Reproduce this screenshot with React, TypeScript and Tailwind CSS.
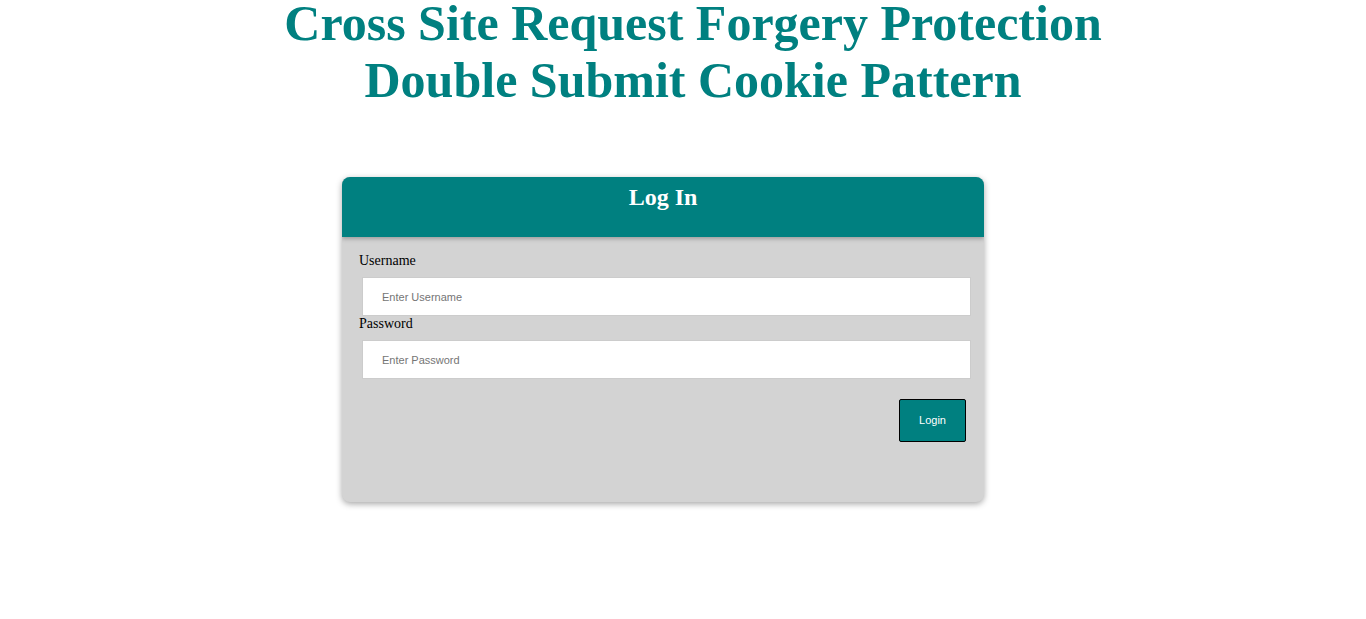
import React from 'react';

const App: React.FC = () => {
    return (
        <div className="min-h-[619px] bg-white font-['Liberation_Serif',serif] overflow-hidden">
            <h1 className="-mt-[5px] pl-[20px] text-center text-[50px] font-bold leading-[57px] text-[#008080]">
                Cross Site Request Forgery Protection<br />
                Double Submit Cookie Pattern
            </h1>

            <div className="ml-[342px] mt-[68px] w-[642px] h-[325px] rounded-lg bg-[#d3d3d3] shadow-[0_2px_6px_rgba(0,0,0,0.35)] overflow-hidden">
                <div className="relative z-10 h-[60px] bg-[#008080] pt-[6px] text-center shadow-[0_2px_4px_rgba(0,0,0,0.25)]">
                    <h2 className="text-[24px] font-bold leading-[28px] text-white">Log In</h2>
                </div>
                <form className="px-[17px] pt-[16px]" onSubmit={e => e.preventDefault()}>
                    <label className="block text-[14px] leading-[16px] text-black">Username</label>
                    <input
                        type="text"
                        placeholder="Enter Username"
                        className="mt-[8px] ml-[3px] block h-[39px] w-[609px] border border-[#cccccc] bg-white pl-[19px] font-['Liberation_Sans',sans-serif] text-[11px] text-black placeholder:text-[#757575] outline-none"
                    />
                    <label className="block text-[14px] leading-[16px] text-black">Password</label>
                    <input
                        type="password"
                        placeholder="Enter Password"
                        className="mt-[8px] ml-[3px] block h-[39px] w-[609px] border border-[#cccccc] bg-white pl-[19px] font-['Liberation_Sans',sans-serif] text-[11px] text-black placeholder:text-[#757575] outline-none"
                    />
                    <div className="mt-[20px] flex justify-end pr-px">
                        <button
                            type="submit"
                            className="h-[43px] w-[67px] rounded-[2px] border border-black bg-[#008080] font-['Liberation_Sans',sans-serif] text-[11px] text-white"
                        >
                            Login
                        </button>
                    </div>
                </form>
            </div>
        </div>
    );
};

export default App;
